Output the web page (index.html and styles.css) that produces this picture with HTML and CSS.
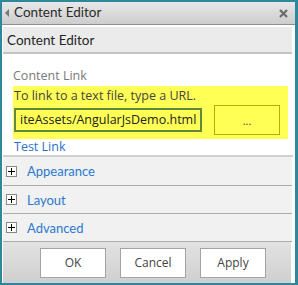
FILE: index.html
```html
<!DOCTYPE html>
<html lang="en">
<head>
    <meta charset="UTF-8">
    <title>Content Editor</title>
    <link rel="stylesheet" href="styles.css">
</head>
<body>
    <div class="dialog">
        <div class="titleBar">
            <span class="collapseArrow"></span>
            <span class="titleText">Content Editor</span>
            <svg class="closeIcon" width="9" height="9" viewBox="0 0 9 9">
                <path d="M1 1 L8 8 M8 1 L1 8" stroke="#6b6b6b" stroke-width="2.2"/>
            </svg>
        </div>

        <div class="panel">
            <div class="sectionHead">Content Editor</div>

            <div class="linkBlock">
                <div class="fieldLabel">Content Link</div>
                <div class="highlight">
                    <div class="hint">To link to a text file, type a URL.</div>
                    <div class="inputRow">
                        <div class="urlBox">iteAssets/AngularJsDemo.html</div>
                        <button class="browseBtn">...</button>
                    </div>
                </div>
                <a class="testLink" href="#">Test Link</a>
            </div>

            <div class="groups">
                <div class="groupRow"><span class="plusBox"></span><span class="groupName">Appearance</span></div>
                <div class="groupRow"><span class="plusBox"></span><span class="groupName">Layout</span></div>
                <div class="groupRow"><span class="plusBox"></span><span class="groupName">Advanced</span></div>
            </div>

            <div class="footer">
                <button class="dlgBtn">OK</button>
                <button class="dlgBtn">Cancel</button>
                <button class="dlgBtn">Apply</button>
            </div>
        </div>
    </div>
</body>
</html>
```

FILE: styles.css
```css
* {
    margin: 0;
    padding: 0;
    box-sizing: border-box;
}

body {
    font-family: "Open Sans", "Noto Sans", sans-serif;
    background-color: #fff;
    color: #333;
}

.dialog {
    width: 298px;
    height: 285px;
    border: 2px solid #2e889b;
    border-right-width: 3px;
    display: flex;
    flex-direction: column;
    background-color: #fff;
}

/* title bar */
.titleBar {
    height: 23px;
    display: flex;
    align-items: center;
    padding: 0 7px 0 3px;
    background: linear-gradient(#e8e8e8, #cdcdcd);
    border-bottom: 1px solid #8e8e8e;
}

.collapseArrow {
    width: 0;
    height: 0;
    border-top: 4px solid transparent;
    border-bottom: 4px solid transparent;
    border-right: 4px solid #777;
    margin-right: 5px;
}

.titleText {
    font-family: Lato, sans-serif;
    font-size: 13.5px;
    color: #2b2b2b;
    flex: 1;
    line-height: 1;
}

.closeIcon {
    display: block;
}

/* panel */
.panel {
    flex: 1;
    display: flex;
    flex-direction: column;
    padding: 2px 2px 0 1px;
}

.sectionHead {
    height: 27px;
    background-color: #ebebeb;
    border-bottom: 2px solid #c4c4c4;
    font-family: Lato, sans-serif;
    font-size: 13.5px;
    color: #262626;
    padding: 5px 0 0 4px;
    margin-right: 1px;
}

.linkBlock {
    padding: 13px 5px 0 10px;
    height: 103px;
    border-bottom: 2px solid #cfcfcf;
}

.fieldLabel {
    font-size: 12.5px;
    color: #7a7a7a;
    line-height: 18px;
    margin-bottom: 1px;
}

.highlight {
    background-color: #ffff55;
    padding: 0 8px 4px 1px;
}

.hint {
    font-size: 12.5px;
    color: #444;
    line-height: 19px;
}

.inputRow {
    height: 30px;
    display: flex;
    align-items: center;
    justify-content: space-between;
}

.urlBox {
    width: 188px;
    height: 24px;
    border: 2px solid #5f8a3e;
    font-size: 12.5px;
    color: #222;
    padding-left: 4px;
    line-height: 20px;
    white-space: nowrap;
    overflow: hidden;
}

.browseBtn {
    width: 66px;
    height: 30px;
    background-color: #ffff55;
    border: 1px solid #b8b000;
    font-family: inherit;
    font-size: 11px;
    color: #444;
}

.testLink {
    display: block;
    font-size: 12.5px;
    color: #2a72c9;
    text-decoration: none;
    line-height: 16px;
    padding-left: 1px;
}

/* collapsible groups */
.groups {
    background-color: #f1f1f1;
    margin-right: 1px;
}

.groupRow {
    height: 28px;
    display: flex;
    align-items: center;
    border-bottom: 1px solid #aaa;
    padding-left: 3px;
}

.groupRow:first-child {
    height: 29px;
}

.plusBox {
    width: 11px;
    height: 11px;
    border: 1px solid #888;
    background:
        linear-gradient(#000, #000) center / 7px 1px no-repeat,
        linear-gradient(#000, #000) center / 1px 7px no-repeat,
        #fff;
    margin-right: 10px;
}

.groupName {
    font-family: Lato, sans-serif;
    font-size: 13px;
    color: #2a7ad0;
}

/* footer buttons */
.footer {
    flex: 1;
    display: flex;
    justify-content: center;
    align-items: center;
    gap: 14px;
    padding-left: 12px;
    background: linear-gradient(#e2e2e2, #cfcfcf);
    margin-right: 2px;
}

.dlgBtn {
    width: 66px;
    height: 30px;
    background-color: #fff;
    border: 1px solid #a3a3a3;
    font-family: inherit;
    font-size: 12px;
    color: #444;
}
```
